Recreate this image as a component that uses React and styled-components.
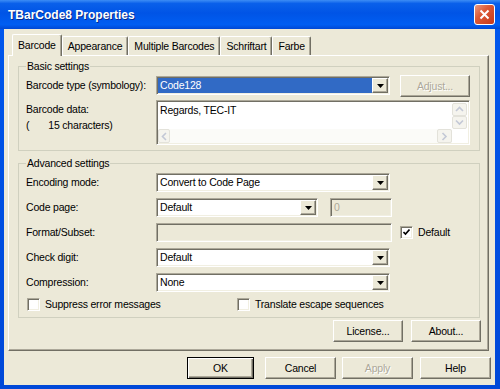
import React from "react";
import styled, { createGlobalStyle, css } from "styled-components";

const GlobalStyle = createGlobalStyle`
  html, body { margin: 0; padding: 0; background: #fff; }
  body {
    font-family: "Liberation Sans", Arial, sans-serif;
    font-size: 10.5px;
    letter-spacing: -0.2px;
    color: #000;
  }
  * { box-sizing: border-box; }
`;

const raised = css`
  border: 1px solid;
  border-color: #fff #716f64 #716f64 #fff;
  box-shadow: inset -1px -1px 0 #aca899;
`;

const sunken = css`
  border: 1px solid;
  border-color: #aca899 #fff #fff #aca899;
  box-shadow: inset 1px 1px 0 #716f64, inset -1px -1px 0 #f1efe2;
`;

const Window = styled.div`
  width: 500px;
  height: 389px;
  display: flex;
  flex-direction: column;
  background: linear-gradient(to bottom, #0058ee, #0048d8);
`;

const TitleBar = styled.div`
  height: 29px;
  flex: none;
  display: flex;
  align-items: center;
  justify-content: space-between;
  padding: 0 5px 0 8px;
  background: linear-gradient(
    to bottom,
    #3d8df5 0%,
    #0a60ea 12%,
    #0054e6 45%,
    #005ef2 85%,
    #0048d4 100%
  );
`;

const Title = styled.div`
  color: #fff;
  font-weight: bold;
  font-size: 12px;
  letter-spacing: 0;
  text-shadow: 1px 1px 0 #0a2a8a;
  padding-top: 1px;
`;

const CloseButton = styled.div`
  width: 21px;
  height: 21px;
  border: 1px solid #fff;
  border-radius: 3px;
  background: linear-gradient(135deg, #ea9a82 0%, #dc5a37 40%, #c7391a 100%);
  display: flex;
  align-items: center;
  justify-content: center;
`;

const Body = styled.div`
  flex: 1;
  margin: 0 5px 4px 4px;
  background: #ece9d8;
  padding: 5px 6px 0 4px;
  display: flex;
  flex-direction: column;
`;

const Tabs = styled.div`
  height: 21px;
  display: flex;
  align-items: flex-end;
  padding-left: 4px;
  position: relative;
  z-index: 1;
`;

const Tab = styled.div`
  background: #ece9d8;
  border-top: 1px solid #fff;
  border-left: 1px solid #fff;
  border-right: 1px solid #716f64;
  border-radius: 2px 2px 0 0;
  box-shadow: inset -1px 0 0 #aca899;
  line-height: 13px;
  white-space: nowrap;
  ${(p) =>
    p.$active
      ? css`
          height: 22px;
          padding: 4px 5px 0;
          margin-bottom: -1px;
        `
      : css`
          height: 19px;
          padding: 3px 5px 0;
        `}
`;

const Panel = styled.div`
  border: 1px solid;
  border-color: #fff #716f64 #716f64 #fff;
  box-shadow: inset -1px -1px 0 #aca899;
  padding: 4px 8px 8px 9px;
  display: flex;
  flex-direction: column;
`;

const Group = styled.fieldset`
  margin: ${(p) => p.$mt || 0}px 0 0;
  padding: ${(p) => p.$pt}px 8px ${(p) => p.$pb}px 7px;
  border: 1px solid #d0d0bf;
  min-width: 0;
`;

const Legend = styled.legend`
  padding: 0 1px;
  line-height: 13px;
`;

const FieldRow = styled.div`
  display: flex;
  align-items: ${(p) => (p.$top ? "flex-start" : "center")};
  height: ${(p) => p.$h || 19}px;
  margin-top: ${(p) => p.$mt || 0}px;
`;

const Label = styled.div`
  width: 130px;
  flex: none;
  line-height: 13px;
  white-space: pre;
`;

const LabelStack = styled(Label)`
  padding-top: 3px;
  display: flex;
  flex-direction: column;
  gap: 3px;
`;

const ComboBox = styled.div`
  ${sunken};
  width: ${(p) => p.$w}px;
  height: 19px;
  flex: none;
  padding: 1px;
  background: #fff;
  display: flex;
`;

const ComboText = styled.div`
  flex: 1;
  padding-left: 2px;
  line-height: 15px;
  background: ${(p) => (p.$selected ? "#316ac5" : "transparent")};
  color: ${(p) => (p.$selected ? "#fff" : "#000")};
`;

const DropButton = styled.div`
  ${raised};
  width: 16px;
  background: #ece9d8;
  display: flex;
  align-items: center;
  justify-content: center;
`;

const Edit = styled.div`
  ${sunken};
  width: ${(p) => p.$w}px;
  height: 19px;
  flex: none;
  margin-left: ${(p) => p.$ml || 0}px;
  padding: 0 3px;
  line-height: 17px;
  background: #ece9d8;
  color: #aca899;
`;

const Button = styled.button`
  font: inherit;
  letter-spacing: inherit;
  width: ${(p) => p.$w || 70}px;
  height: 22px;
  flex: none;
  padding: 0;
  background: #ece9d8;
  margin-left: ${(p) => p.$ml || 0}px;
  ${raised};
  color: ${(p) => (p.disabled ? "#aca899" : "#000")};
  text-shadow: ${(p) => (p.disabled ? "1px 1px 0 #fff" : "none")};
  ${(p) =>
    p.$default &&
    css`
      border: 1px solid #000;
      box-shadow: inset 1px 1px 0 #fff, inset -1px -1px 0 #716f64,
        inset -2px -2px 0 #aca899;
    `}
`;

const Memo = styled.div`
  ${sunken};
  width: 314px;
  height: 45px;
  padding: 1px;
  background: #fff;
  display: grid;
  grid-template-columns: 1fr 16px;
  grid-template-rows: 1fr 14px;
`;

const MemoText = styled.div`
  padding: 2px 0 0 2px;
  line-height: 13px;
`;

const VScroll = styled.div`
  display: flex;
  flex-direction: column;
  padding-top: 1px;
`;

const HScroll = styled.div`
  display: flex;
  justify-content: space-between;
  background: #fbfbf8;
`;

const ScrollBtn = styled.div`
  width: ${(p) => p.$w || 15}px;
  height: ${(p) => p.$h || 13}px;
  border: 1px solid #e3e2da;
  border-radius: 2px;
  background: #f5f4ee;
  display: flex;
  align-items: center;
  justify-content: center;
`;

const Check = styled.div`
  ${sunken};
  width: 13px;
  height: 13px;
  flex: none;
  background: #fff;
  display: flex;
  align-items: center;
  justify-content: center;
`;

const CheckItem = styled.div`
  display: flex;
  align-items: center;
  gap: 5px;
  width: ${(p) => (p.$w ? `${p.$w}px` : "auto")};
  margin-left: ${(p) => p.$ml || 0}px;
  line-height: 13px;
`;

const ButtonRow = styled.div`
  display: flex;
  justify-content: flex-end;
  margin-top: ${(p) => p.$mt || 0}px;
  margin-right: ${(p) => p.$mr || 0}px;
`;

const Arrow = () => (
  <svg width="7" height="4" viewBox="0 0 7 4">
    <path d="M0 0h7L3.5 4z" fill="#000" />
  </svg>
);

const Chevron = ({ dir }) => {
  const d = {
    up: "M1 5l3.5-3.5L8 5",
    down: "M1 1.5L4.5 5 8 1.5",
    left: "M5 1L1.5 4.5 5 8",
    right: "M1.5 1L5 4.5 1.5 8",
  }[dir];
  const vertical = dir === "up" || dir === "down";
  return (
    <svg
      width={vertical ? 9 : 7}
      height={vertical ? 7 : 9}
      viewBox={vertical ? "0 0 9 7" : "0 0 7 9"}
    >
      <path d={d} fill="none" stroke="#c3c8d6" strokeWidth="1.6" />
    </svg>
  );
};

const CheckMark = () => (
  <svg width="7" height="7" viewBox="0 0 7 7">
    <path d="M0.5 3l2 2 4-4.5" fill="none" stroke="#000" strokeWidth="1.6" />
  </svg>
);

const Combo = ({ w, value, selected }) => (
  <ComboBox $w={w}>
    <ComboText $selected={selected}>{value}</ComboText>
    <DropButton>
      <Arrow />
    </DropButton>
  </ComboBox>
);

const CheckBox = ({ label, checked, w, ml }) => (
  <CheckItem $w={w} $ml={ml}>
    <Check>{checked && <CheckMark />}</Check>
    {label}
  </CheckItem>
);

const tabs = ["Barcode", "Appearance", "Multiple Barcodes", "Schriftart", "Farbe"];

export default function App() {
  return (
    <>
      <GlobalStyle />
      <Window>
        <TitleBar>
          <Title>TBarCode8 Properties</Title>
          <CloseButton>
            <svg width="11" height="11" viewBox="0 0 11 11">
              <path d="M1.5 1.5l8 8M9.5 1.5l-8 8" stroke="#fff" strokeWidth="2" />
            </svg>
          </CloseButton>
        </TitleBar>
        <Body>
          <Tabs>
            {tabs.map((t, i) => (
              <Tab key={t} $active={i === 0}>
                {t}
              </Tab>
            ))}
          </Tabs>
          <Panel>
            <Group $pt={2} $pb={5}>
              <Legend>Basic settings</Legend>
              <FieldRow $h={21}>
                <Label>Barcode type (symbology):</Label>
                <Combo w={234} value="Code128" selected />
                <Button $w={70} $ml={10} disabled>
                  Adjust...
                </Button>
              </FieldRow>
              <FieldRow $h={45} $mt={4} $top>
                <LabelStack>
                  <span>Barcode data:</span>
                  <span>{"(       15 characters)"}</span>
                </LabelStack>
                <Memo>
                  <MemoText>Regards, TEC-IT</MemoText>
                  <VScroll>
                    <ScrollBtn>
                      <Chevron dir="up" />
                    </ScrollBtn>
                    <ScrollBtn>
                      <Chevron dir="down" />
                    </ScrollBtn>
                  </VScroll>
                  <HScroll>
                    <ScrollBtn $w={12} $h={14}>
                      <Chevron dir="left" />
                    </ScrollBtn>
                    <ScrollBtn $w={15} $h={14}>
                      <Chevron dir="right" />
                    </ScrollBtn>
                  </HScroll>
                </Memo>
              </FieldRow>
            </Group>

            <Group $mt={6} $pt={3} $pb={6}>
              <Legend>Advanced settings</Legend>
              <FieldRow>
                <Label>Encoding mode:</Label>
                <Combo w={234} value="Convert to Code Page" />
              </FieldRow>
              <FieldRow $mt={6}>
                <Label>Code page:</Label>
                <Combo w={162} value="Default" />
                <Edit $w={62} $ml={12}>
                  0
                </Edit>
              </FieldRow>
              <FieldRow $mt={6}>
                <Label>Format/Subset:</Label>
                <Edit $w={236} />
                <CheckBox label="Default" checked ml={8} />
              </FieldRow>
              <FieldRow $mt={6}>
                <Label>Check digit:</Label>
                <Combo w={234} value="Default" />
              </FieldRow>
              <FieldRow $mt={6}>
                <Label>Compression:</Label>
                <Combo w={234} value="None" />
              </FieldRow>
              <FieldRow $h={13} $mt={6}>
                <CheckBox label="Suppress error messages" w={210} ml={1} />
                <CheckBox label="Translate escape sequences" />
              </FieldRow>
            </Group>

            <ButtonRow $mt={2} $mr={-1}>
              <Button $w={70}>License...</Button>
              <Button $w={70} $ml={8}>
                About...
              </Button>
            </ButtonRow>
          </Panel>

          <ButtonRow $mt={6} $mr={-2}>
            <Button $w={67} $default>
              OK
            </Button>
            <Button $w={71} $ml={11}>
              Cancel
            </Button>
            <Button $w={71} $ml={6} disabled>
              Apply
            </Button>
            <Button $w={71} $ml={7}>
              Help
            </Button>
          </ButtonRow>
        </Body>
      </Window>
    </>
  );
}
